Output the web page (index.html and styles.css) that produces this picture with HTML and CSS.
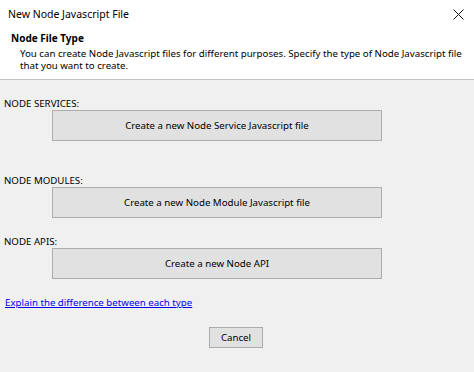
FILE: index.html
```html
<!DOCTYPE html>
<html lang="en">

<head>
    <meta charset="UTF-8">
    <meta name="viewport" content="width=device-width, initial-scale=1.0">
    <title>New Node Javascript File</title>
    <link rel="stylesheet" href="styles.css">
</head>

<body>
    <div class="dialog">
        <div class="header">
            <div class="titlebar">
                <span class="title">New Node Javascript File</span>
                <svg class="close" width="11" height="11" viewBox="0 0 11 11">
                    <path d="M0.5 0.5 L10.5 10.5 M10.5 0.5 L0.5 10.5" stroke="#111" stroke-width="1" fill="none" />
                </svg>
            </div>
            <div class="heading">Node File Type</div>
            <p class="desc">You can create Node Javascript files for different purposes. Specify the type of Node Javascript file that you want to create.</p>
        </div>

        <div class="content">
            <div class="group">
                <label class="group-label">NODE SERVICES:</label>
                <button class="wide-btn">Create a new Node Service Javascript file</button>
            </div>
            <div class="group modules">
                <label class="group-label">NODE MODULES:</label>
                <button class="wide-btn">Create a new Node Module Javascript file</button>
            </div>
            <div class="group">
                <label class="group-label">NODE APIS:</label>
                <button class="wide-btn">Create a new Node API</button>
            </div>

            <a class="explain" href="#">Explain the difference between each type</a>

            <div class="footer">
                <button class="cancel">Cancel</button>
            </div>
        </div>
    </div>
</body>

</html>
```

FILE: styles.css
```css
body {
    margin: 0;
    font: normal 9.7px/13px "Noto Sans", "Open Sans", sans-serif;
    color: #000;
    background: #f0f0f0;
}

.dialog {
    width: 474px;
    height: 372px;
    display: flex;
    flex-direction: column;
}

.header {
    background: #fff;
    height: 80px;
    border-bottom: 1px solid #c4c4c4;
    box-sizing: border-box;
}

.titlebar {
    display: flex;
    justify-content: space-between;
    align-items: center;
    height: 28px;
    padding: 0 10px 0 8px;
}

.title {
    font-size: 10.5px;
}

.close {
    display: block;
}

.heading {
    font-weight: bold;
    font-size: 10px;
    padding-left: 11px;
    margin-top: 4px;
}

.desc {
    margin: 3px 0 0 20px;
    width: 450px;
    line-height: 12px;
}

.content {
    flex: 1;
    padding: 17px 0 0 0;
}

.group {
    display: flex;
    flex-direction: column;
    margin-bottom: 17px;
}

.group.modules {
    margin-top: 33px;
}

.group-label {
    padding-left: 4px;
}

.wide-btn {
    margin-left: 52px;
    width: 330px;
    height: 31px;
    border: 1px solid #adadad;
    background: #e1e1e1;
    font: inherit;
    color: #000;
}

.explain {
    display: block;
    padding-left: 5px;
    color: #0000ee;
}

.footer {
    display: flex;
    justify-content: center;
    margin-top: 18px;
    padding-right: 2px;
}

.cancel {
    width: 54px;
    height: 21px;
    border: 1px solid #adadad;
    background: #e1e1e1;
    font: inherit;
    color: #000;
}
```
